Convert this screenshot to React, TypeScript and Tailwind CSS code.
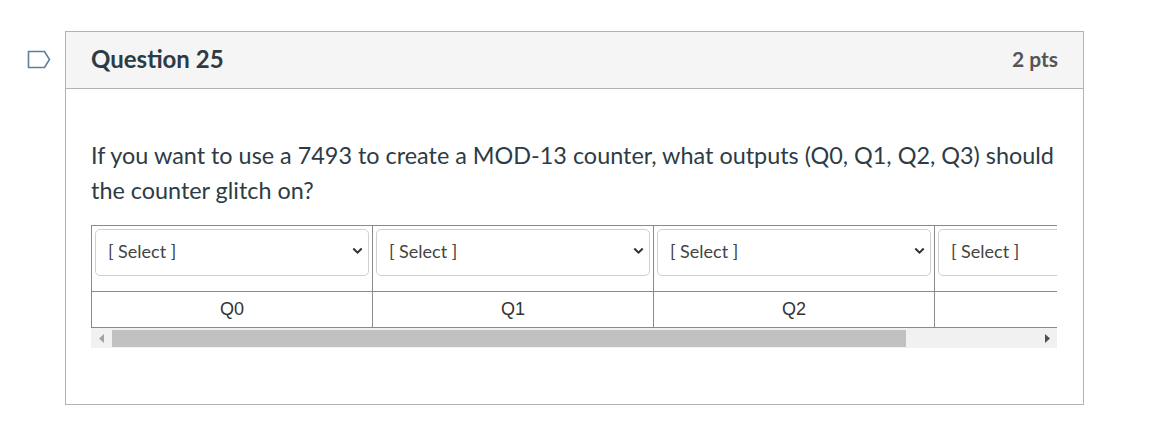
import React from 'react'

const columns = ['Q0', 'Q1', 'Q2', 'Q3']

function Chevron() {
  return (
    <svg width="11" height="8" viewBox="0 0 11 8" className="shrink-0">
      <path d="M1.3 1.5 L5.5 5.7 L9.7 1.5" fill="none" stroke="#333" strokeWidth="2" />
    </svg>
  )
}

export default function App() {
  return (
    <div className="relative w-[1157px] h-[441px] bg-white overflow-hidden" style={{ fontFamily: 'Lato, "Noto Sans", sans-serif' }}>
      {/* bookmark flag */}
      <svg className="absolute left-[27px] top-[50px]" width="25" height="19" viewBox="0 0 25 19">
        <path d="M1.5 1.5 H17.5 L22.5 9.5 L17.5 17.5 H1.5 Z" fill="none" stroke="#5f7f9c" strokeWidth="1.6" />
      </svg>

      <div className="ml-[65px] mt-[31px] w-[1019px] h-[374px] border border-[#b3b3b3]">
        <div className="h-[57px] bg-[#f5f5f5] border-b border-[#b3b3b3] flex items-center justify-between pl-[25px] pr-[25px] pb-[3px] text-[#2d3b45]">
          <span className="text-[24px] font-bold">Question 25</span>
          <span className="text-[21px] font-bold text-[#555]">2 pts</span>
        </div>

        <div className="pl-[25px] pt-[49px]">
          <p className="text-[23.4px] leading-[35px] text-[#2d3b45] whitespace-nowrap">
            If you want to use a 7493 to create a MOD-13 counter, what outputs (Q0, Q1, Q2, Q3) should
            <br />
            the counter glitch on?
          </p>

          <div className="mt-[17px] w-[966px] overflow-hidden">
            <div className="flex w-[1126px] border-t border-[#8a8a8a]">
              {columns.map((c) => (
                <div key={c} className="w-[281px] shrink-0 pt-[3px] pb-[15px] px-[3px] border-l border-[#8a8a8a]">
                  <div className="h-[47px] rounded-[5px] border border-[#cfcfcf] flex items-center justify-between pl-[12px] pr-[5px] pb-[3px] text-[18px] text-[#444]">
                    <span>[ Select ]</span>
                    <Chevron />
                  </div>
                </div>
              ))}
            </div>
            <div className="flex w-[1126px] border-t border-[#8a8a8a] border-b">
              {columns.map((c) => (
                <div key={c} className="w-[281px] shrink-0 h-[35px] border-l border-[#8a8a8a] flex items-center justify-center text-[18px] text-[#333]" style={{ fontFamily: '"Liberation Sans", Arial, sans-serif' }}>
                  {c === 'Q3' ? '' : c}
                </div>
              ))}
            </div>
            {/* horizontal scrollbar */}
            <div className="h-[20px] bg-[#f1f1f1] flex items-center">
              <div className="w-[21px] flex justify-center">
                <svg width="6" height="9" viewBox="0 0 6 9"><path d="M5 0 L0 4.5 L5 9 Z" fill="#a3a3a3" /></svg>
              </div>
              <div className="w-[794px] h-[17px] bg-[#c1c1c1]" />
              <div className="flex-1" />
              <div className="w-[21px] flex justify-center">
                <svg width="6" height="9" viewBox="0 0 6 9"><path d="M1 0 L6 4.5 L1 9 Z" fill="#505050" /></svg>
              </div>
            </div>
          </div>
        </div>
      </div>
    </div>
  )
}
